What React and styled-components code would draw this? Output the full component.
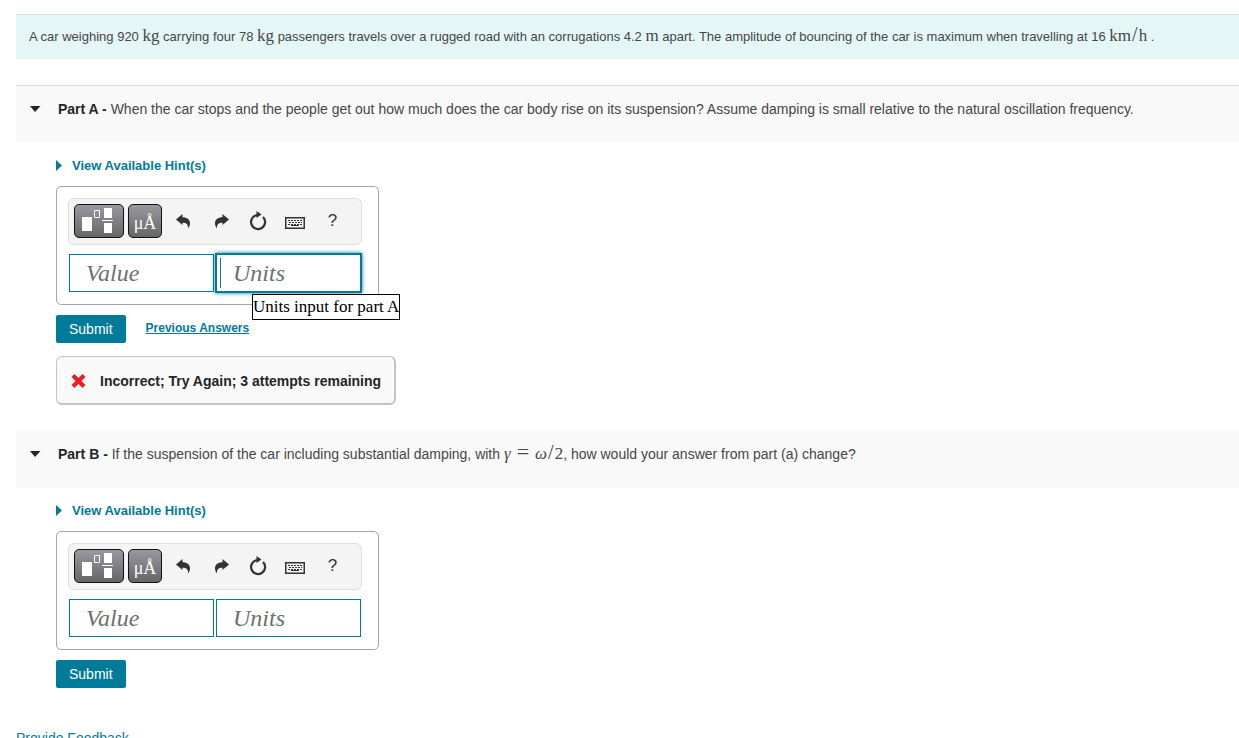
import React from "react"
import styled, { createGlobalStyle, css } from "styled-components"

const GlobalStyle = createGlobalStyle`
  * {
    box-sizing: border-box;
  }
  body {
    margin: 0;
    background: #ffffff;
    color: #252525;
    font-family: "Liberation Sans", Arial, sans-serif;
    font-size: 14px;
    line-height: 20px;
  }
`

const Page = styled.main`
  padding: 14px 0 0 16px;
`

const Intro = styled.p`
  margin: 0 0 26px;
  padding: 12px 13px;
  border-top: 1px solid #dcdcdc;
  background: #e4f7f6;
  color: #464646;
  font-size: 13px;
`

const MathText = styled.span`
  font-family: "Liberation Serif", "Times New Roman", serif;
  font-size: 17px;
  line-height: 1;
`

const MathVar = styled(MathText)`
  font-style: italic;
`

const MathSlash = styled(MathText)`
  margin: 0 1px;
  font-size: 20px;
  line-height: 0;
`

const MathOp = styled(MathText)`
  margin: 0 6px;
  font-size: 22px;
  line-height: 0;
`

const Part = styled.section`
  margin-bottom: 25px;
`

const PartHeader = styled.header`
  display: flex;
  align-items: flex-start;
  gap: 17px;
  min-height: 58px;
  padding: 13px;
  border-top: 1px solid ${(props) => (props.$ruled ? "#dcdcdc" : "#f9f9f9")};
  background: #f9f9f9;
`

const Toggle = styled.button`
  display: flex;
  align-items: center;
  height: 20px;
  padding: 0;
  border: 0;
  background: none;
  color: #252525;
`

const PartText = styled.h2`
  margin: 0;
  color: #464646;
  font-size: 14px;
  font-weight: 400;
  line-height: 20px;
  b {
    color: #252525;
  }
`

const PartBody = styled.div`
  display: flex;
  flex-direction: column;
  align-items: flex-start;
  padding: 13px 0 0 40px;
`

const HintButton = styled.button`
  display: flex;
  align-items: center;
  gap: 10px;
  margin-bottom: 10px;
  padding: 0;
  border: 0;
  background: none;
  color: #007a99;
  font-family: inherit;
  font-size: 13px;
  font-weight: 700;
  line-height: 20px;
`

const AnswerBox = styled.div`
  padding: 11px 16px 12px 11px;
  border: 1px solid #a6a6a6;
  border-radius: 5px;
`

const Toolbar = styled.div`
  display: flex;
  align-items: center;
  width: 294px;
  height: 47px;
  margin-bottom: 9px;
  padding: 0 5px 1px;
  border: 1px solid #dddddd;
  border-radius: 6px;
  background: #f4f4f4;
`

const DarkButton = styled.button`
  display: flex;
  align-items: center;
  justify-content: center;
  width: ${(props) => (props.$wide ? "50px" : "34px")};
  height: 34px;
  margin-right: 4px;
  padding: 0;
  border: 1px solid #111111;
  border-radius: 5px;
  background: linear-gradient(#9a98a0, #666666);
  color: #ffffff;
  font-family: "Liberation Serif", "Times New Roman", serif;
  font-size: 18px;
  line-height: 32px;
  span {
    padding-top: 3px;
  }
`

const ToolButton = styled.button`
  display: flex;
  align-items: center;
  justify-content: center;
  width: 37px;
  height: 34px;
  padding: 0;
  border: 0;
  background: none;
  color: #333333;
  font-family: inherit;
  font-size: 17px;
`

const Fields = styled.div`
  display: flex;
  gap: 2px;
  padding: 0 1px;
`

const Field = styled.label`
  position: relative;
  display: block;
`

const focused = css`
  outline: 1px solid #007a99;
  box-shadow: 0 0 4px 1px #007a99;
`

const FieldInput = styled.input`
  display: block;
  width: 145px;
  height: 38px;
  padding: 0 16px;
  border: 1px solid #007a99;
  border-radius: 0;
  background: #ffffff;
  font-family: "Liberation Serif", "Times New Roman", serif;
  font-size: 24px;
  font-style: italic;
  ${(props) => props.$active && focused}
  &::placeholder {
    color: #6f6f6f;
    opacity: 1;
  }
`

const Caret = styled.span`
  position: absolute;
  top: 4px;
  left: 4px;
  width: 1px;
  height: 30px;
  background: #2a5bd7;
`

const Tooltip = styled.span`
  position: absolute;
  top: 40px;
  left: 36px;
  z-index: 1;
  height: 26px;
  border: 1px solid #000000;
  background: #ffffff;
  color: #000000;
  font-family: "Liberation Serif", "Times New Roman", serif;
  font-size: 17px;
  line-height: 24px;
  white-space: nowrap;
`

const Actions = styled.div`
  display: flex;
  align-items: center;
  gap: 20px;
  margin-top: 10px;
`

const SubmitButton = styled.button`
  height: 28px;
  padding: 0 13px;
  border: 0;
  border-radius: 2px;
  background: #007a99;
  color: #ffffff;
  font-family: inherit;
  font-size: 14px;
`

const AnswersLink = styled.a`
  padding-bottom: 2px;
  color: #007a99;
  font-size: 12px;
  font-weight: 700;
`

const Feedback = styled.div`
  display: flex;
  align-items: center;
  gap: 14px;
  height: 49px;
  margin-top: 13px;
  padding: 1px 13px 0 14px;
  border: 1px solid #c4c4c4;
  border-width: 1px 2px 2px 1px;
  border-radius: 6px;
  background: #f9f9f9;
  font-weight: 700;
`

const Footer = styled.footer`
  padding-top: 15px;
`

const FeedbackLink = styled.a`
  color: #007a99;
  text-decoration: none;
`

const TemplatesIcon = () => (
  <svg width="34" height="28" viewBox="0 0 34 28" aria-hidden="true">
    <path fill="#fff" d="M0 10h10v14H0zM22 1h8v10h-8zM22 16h8v10h-8zM20 13h11v1H20z" />
    <path fill="none" stroke="#fff" d="M12.500 3.500h5v7h-5z" />
  </svg>
)

const UndoIcon = () => (
  <svg width="18" height="16" viewBox="0 0 18 16" aria-hidden="true">
    <path
      fill="currentColor"
      d="M0 6.500L6.500 1v3.200c4.500 0 7.500 2.300 7.500 6 0 2-.700 3.800-2 5.300.400-4-1.500-5.700-5.500-5.700V12z"
    />
  </svg>
)

const RedoIcon = () => (
  <svg width="14" height="16" viewBox="0 0 14 16" aria-hidden="true">
    <path
      fill="currentColor"
      d="M14 6.500L7.500 1v3.200C3 4.200 0 6.500 0 10.200c0 2 .700 3.800 2 5.300-.400-4 1.500-5.700 5.500-5.700V12z"
    />
  </svg>
)

const ResetIcon = () => (
  <svg width="20" height="20" viewBox="0 0 20 20" aria-hidden="true">
    <path fill="none" stroke="currentColor" strokeWidth="2.200" d="M9 4a7 7 0 1 0 5 2" />
    <path fill="currentColor" d="M7.500 0l5 3.500-5 3.500z" />
  </svg>
)

const KeyboardIcon = () => (
  <svg width="22" height="18" viewBox="0 0 22 18" aria-hidden="true">
    <path fill="none" stroke="currentColor" strokeWidth="1.500" d="M.750 5.750h18.500v10.500H.750z" />
    <path stroke="currentColor" strokeDasharray="2 1" d="M3 8.500h14M4 10.500h13M3 12.500h14" />
    <path stroke="currentColor" d="M6 13.500h8" />
  </svg>
)

const CrossIcon = () => (
  <svg width="15" height="14" viewBox="0 0 15 14" aria-hidden="true">
    <path stroke="#ed1c24" strokeWidth="4" d="M2 1.500l11 11M13 1.500l-11 11" />
  </svg>
)

const AnswerEditor = ({ part, active }) => (
  <AnswerBox>
    <Toolbar role="toolbar" aria-label={`Tools for part ${part}`}>
      <DarkButton type="button" $wide aria-label="Templates">
        <TemplatesIcon />
      </DarkButton>
      <DarkButton type="button">
        <span>μÅ</span>
      </DarkButton>
      <ToolButton type="button" aria-label="Undo">
        <UndoIcon />
      </ToolButton>
      <ToolButton type="button" aria-label="Redo">
        <RedoIcon />
      </ToolButton>
      <ToolButton type="button" aria-label="Reset">
        <ResetIcon />
      </ToolButton>
      <ToolButton type="button" aria-label="Keyboard shortcuts">
        <KeyboardIcon />
      </ToolButton>
      <ToolButton type="button">?</ToolButton>
    </Toolbar>
    <Fields>
      <Field>
        <FieldInput placeholder="Value" aria-label={`Value input for part ${part}`} />
      </Field>
      <Field>
        <FieldInput $active={active} placeholder="Units" aria-label={`Units input for part ${part}`} />
        {active && <Caret />}
        {active && <Tooltip role="tooltip">Units input for part {part}</Tooltip>}
      </Field>
    </Fields>
  </AnswerBox>
)

const Question = ({ part, ruled, active, text, link, feedback }) => (
  <Part>
    <PartHeader $ruled={ruled}>
      <Toggle type="button" aria-label={`Collapse part ${part}`}>
        <svg width="12" height="6" viewBox="0 0 12 6" aria-hidden="true">
          <path fill="currentColor" d="M1 0h10.500L6 6z" />
        </svg>
      </Toggle>
      <PartText>
        <b>Part {part} - </b>
        {text}
      </PartText>
    </PartHeader>
    <PartBody>
      <HintButton type="button">
        <svg width="6" height="12" viewBox="0 0 6 12" aria-hidden="true">
          <path fill="currentColor" d="M0 0l6 5.500L0 11z" />
        </svg>
        View Available Hint(s)
      </HintButton>
      <AnswerEditor part={part} active={active} />
      <Actions>
        <SubmitButton type="button">Submit</SubmitButton>
        {link && <AnswersLink href="#answers">{link}</AnswersLink>}
      </Actions>
      {feedback && (
        <Feedback role="status">
          <CrossIcon />
          {feedback}
        </Feedback>
      )}
    </PartBody>
  </Part>
)

const App = () => (
  <>
    <GlobalStyle />
    <Page>
      <Intro>
        A car weighing 920 <MathText>kg</MathText> carrying four 78 <MathText>kg</MathText> passengers
        travels over a rugged road with an corrugations 4.2 <MathText>m</MathText> apart. The amplitude of
        bouncing of the car is maximum when travelling at 16 <MathText>km</MathText>
        <MathSlash>/</MathSlash>
        <MathText>h</MathText> .
      </Intro>
      <Question
        part="A"
        ruled
        active
        text="When the car stops and the people get out how much does the car body rise on its suspension? Assume damping is small relative to the natural oscillation frequency."
        link="Previous Answers"
        feedback="Incorrect; Try Again; 3 attempts remaining"
      />
      <Question
        part="B"
        text={
          <>
            If the suspension of the car including substantial damping, with <MathVar>γ</MathVar>
            <MathOp>=</MathOp>
            <MathVar>ω</MathVar>
            <MathSlash>/</MathSlash>
            <MathText>2</MathText>, how would your answer from part (a) change?
          </>
        }
      />
      <Footer>
        <FeedbackLink href="#feedback">Provide Feedback</FeedbackLink>
      </Footer>
    </Page>
  </>
)

export default App
